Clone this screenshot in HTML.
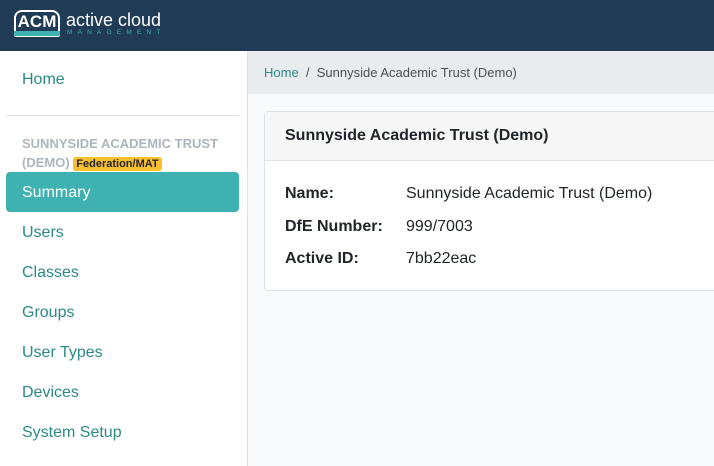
<!DOCTYPE html><html><head><style>
body{margin:0;width:714px;height:466px;overflow:hidden;font-family:"Liberation Sans",sans-serif;background:#f8f9fa;position:relative}
.top{position:absolute;left:0;top:0;width:714px;height:51px;background:#1f3b55}
.side{position:absolute;left:0;top:51px;width:247px;height:415px;background:#fff;border-right:1px solid #dee2e6}
.nav{position:absolute;left:22px;font-size:16px;color:#2b8a85}
.bc{position:absolute;left:248px;top:51px;width:466px;height:43px;background:#e9ecef;font-size:13px;color:#495057}
.card{position:absolute;left:264px;top:111px;width:460px;height:178px;background:#fff;border:1px solid #dee2e6;border-radius:4px}
.ch{height:48px;border-bottom:1px solid #dee2e6;background:#f7f7f7;font-weight:bold;font-size:16px;color:#212529;line-height:48px;padding-left:20px}
.r{position:absolute;font-size:16px;color:#212529}
</style></head><body>
<div class="top">
<div style="position:absolute;left:14px;top:10px;width:46px;height:27px;border:2px solid #fff;border-radius:8px 8px 2px 2px;box-sizing:border-box;color:#fff;font-weight:bold;font-size:17px;line-height:20px;text-align:center">ACM</div>
<div style="position:absolute;left:14px;top:31px;width:46px;height:5px;background:#3eb1b0;border-radius:0 0 2px 2px"></div>
<div style="position:absolute;left:66px;top:10px;color:#fff;font-size:18px">active cloud</div>
<div style="position:absolute;left:67px;top:29px;color:#3eb1b0;font-size:6.5px;letter-spacing:5.2px">MANAGEMENT</div>
</div>
<div class="side">
<div class="nav" style="top:20px">Home</div>
<div style="position:absolute;left:6px;top:64px;width:233px;border-top:1px solid #dee2e6"></div>
<div style="position:absolute;left:22px;top:83px;font-size:13px;font-weight:bold;color:#adb5bd;line-height:19px;width:225px">SUNNYSIDE ACADEMIC TRUST<br>(DEMO) <span style="background:#fbc02d;color:#212529;font-size:11px;padding:1px 3px;border-radius:3px">Federation/MAT</span></div>
<div style="position:absolute;left:6px;top:121px;width:233px;height:40px;background:#3eb1b0;border-radius:4px"></div>
<div class="nav" style="top:133px;color:#fff">Summary</div>
<div class="nav" style="top:173px">Users</div>
<div class="nav" style="top:213px">Classes</div>
<div class="nav" style="top:253px">Groups</div>
<div class="nav" style="top:293px">User Types</div>
<div class="nav" style="top:333px">Devices</div>
<div class="nav" style="top:373px">System Setup</div>
</div>
<div class="bc"><span style="position:absolute;left:16px;top:14px"><span style="color:#2b8a85">Home</span> &nbsp;/&nbsp; Sunnyside Academic Trust (Demo)</span></div>
<div class="card"><div class="ch">Sunnyside Academic Trust (Demo)</div>
<div class="r" style="left:20px;top:73px;font-weight:bold">Name:</div><div class="r" style="left:141px;top:73px">Sunnyside Academic Trust (Demo)</div>
<div class="r" style="left:20px;top:106px;font-weight:bold">DfE Number:</div><div class="r" style="left:141px;top:106px">999/7003</div>
<div class="r" style="left:20px;top:138px;font-weight:bold">Active ID:</div><div class="r" style="left:141px;top:138px">7bb22eac</div>
</div>
</body></html>
